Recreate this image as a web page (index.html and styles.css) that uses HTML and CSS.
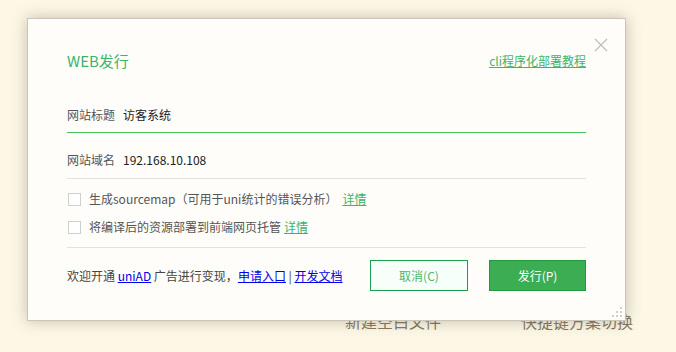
FILE: index.html
```html
<!DOCTYPE html>
<html lang="zh">
<head>
<meta charset="utf-8">
<link rel="stylesheet" href="styles.css">
</head>
<body>
<div class="desk">
  <div class="desk-row">
    <span class="desk-item">新建空白文件</span>
    <span class="desk-item">快捷键方案切换</span>
  </div>
</div>
<div class="dialog">
  <svg class="close" width="14" height="14" viewBox="0 0 14 14"><path d="M1 1L13 13M13 1L1 13" stroke="#bdbdbd" stroke-width="1.2" fill="none"/></svg>
  <div class="head">
    <span class="title">WEB发行</span>
    <a class="cli">cli程序化部署教程</a>
  </div>
  <div class="field active">
    <span class="label">网站标题</span><span class="value">访客系统</span>
  </div>
  <div class="field plain">
    <span class="label">网站域名</span><span class="value">192.168.10.108</span>
  </div>
  <div class="checks">
    <div class="check"><span class="box"></span><span>生成sourcemap（可用于uni统计的错误分析）</span><a class="more first">详情</a></div>
    <div class="check"><span class="box"></span><span>将编译后的资源部署到前端网页托管</span><a class="more">详情</a></div>
  </div>
  <div class="foot">
    <div class="ad">欢迎开通 <a class="blue">uniAD</a> 广告进行变现，<a class="blue">申请入口</a> | <a class="blue">开发文档</a></div>
    <div class="btns">
      <button class="btn cancel">取消(C)</button>
      <button class="btn ok">发行(P)</button>
    </div>
  </div>
  <svg class="grip" width="10" height="10" viewBox="0 0 10 10" fill="#cfcfcf"><rect x="8" y="0" width="2" height="2"/><rect x="4" y="4" width="2" height="2"/><rect x="8" y="4" width="2" height="2"/><rect x="0" y="8" width="2" height="2"/><rect x="4" y="8" width="2" height="2"/><rect x="8" y="8" width="2" height="2"/></svg>
</div>
</body>
</html>
```

FILE: styles.css
```css
html, body {
  margin: 0;
  padding: 0;
}
body {
  width: 676px;
  height: 352px;
  background: #fdf7e6;
  font-family: "Noto Sans CJK SC", "Liberation Sans", sans-serif;
  overflow: hidden;
  position: relative;
}
.desk {
  padding-top: 310px;
}
.desk-row {
  display: flex;
  gap: 80px;
  padding-left: 345px;
}
.desk-item {
  font-size: 16px;
  line-height: 22px;
  color: #85795f;
}
.dialog {
  position: absolute;
  left: 27px;
  top: 18px;
  width: 519px;
  height: 270px;
  padding: 31px 39px 0 39px;
  background: #fffdf9;
  border: 1px solid #c9c6bd;
  box-shadow: 0 0 14px rgba(90, 80, 50, 0.35);
  box-sizing: content-box;
}
.close {
  position: absolute;
  right: 17px;
  top: 19px;
}
.grip {
  position: absolute;
  right: 3px;
  bottom: 3px;
}
.head {
  display: flex;
  justify-content: space-between;
  align-items: center;
  height: 20px;
}
.title {
  font-size: 15px;
  color: #3cb46a;
}
.cli {
  font-size: 12px;
  color: #3cb46a;
  text-decoration: underline;
}
.field {
  display: flex;
  align-items: center;
  font-size: 12px;
  line-height: 20px;
  color: #333;
}
.active {
  margin-top: 35px;
  padding-bottom: 7px;
  border-bottom: 1px solid #3fc35d;
}
.plain {
  padding-top: 17px;
  padding-bottom: 8px;
  border-bottom: 1px solid #e2e2e2;
}
.label {
  color: #555;
  margin-right: 8px;
}
.value {
  color: #222;
}
.checks {
  display: flex;
  flex-direction: column;
  gap: 8px;
  padding: 10px 0 10px 0;
  border-bottom: 1px solid #e2e2e2;
}
.check {
  display: flex;
  align-items: center;
  font-size: 12px;
  line-height: 20px;
  color: #555;
}
.box {
  width: 11px;
  height: 11px;
  border: 1px solid #cfcfcf;
  background: #fff;
  margin: 0 8px 0 1px;
}
.more {
  color: #3cb46a;
  text-decoration: underline;
  margin-left: 3px;
}
.more.first {
  margin-left: 5px;
}
.foot {
  display: flex;
  align-items: center;
  justify-content: space-between;
  margin-top: 12px;
}
.ad {
  font-size: 12px;
  color: #444;
}
.blue {
  color: #0000ee;
  text-decoration: underline;
}
.btns {
  display: flex;
  gap: 21px;
}
.btn {
  width: 98px;
  height: 31px;
  font-family: inherit;
  font-size: 12px;
  padding: 0;
  cursor: default;
}
.cancel {
  background: #f6fff9;
  border: 1px solid #17a04a;
  color: #4db56f;
}
.ok {
  width: 97px;
  background: #3bad52;
  border: 1px solid #22993e;
  color: #ffffff;
}
```
